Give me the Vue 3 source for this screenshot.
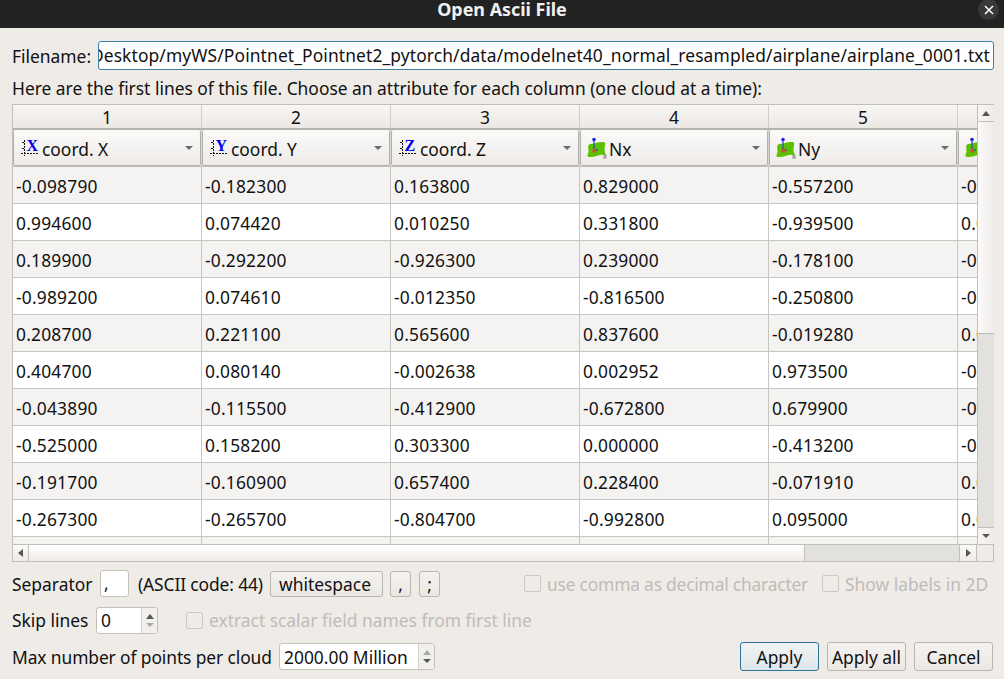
<script setup>
const cols = [
  { n: 1, kind: 'axis', letter: 'X', label: 'coord. X' },
  { n: 2, kind: 'axis', letter: 'Y', label: 'coord. Y' },
  { n: 3, kind: 'axis', letter: 'Z', label: 'coord. Z' },
  { n: 4, kind: 'leaf', label: 'Nx' },
  { n: 5, kind: 'leaf', label: 'Ny' },
  { n: 6, kind: 'leaf', label: '' }
]
const rows = [
  ['-0.098790', '-0.182300', '0.163800', '0.829000', '-0.557200', '-0.0'],
  ['0.994600', '0.074420', '0.010250', '0.331800', '-0.939500', '0.0'],
  ['0.189900', '-0.292200', '-0.926300', '0.239000', '-0.178100', '-0.0'],
  ['-0.989200', '0.074610', '-0.012350', '-0.816500', '-0.250800', '-0.0'],
  ['0.208700', '0.221100', '0.565600', '0.837600', '-0.019280', '0.0'],
  ['0.404700', '0.080140', '-0.002638', '0.002952', '0.973500', '-0.0'],
  ['-0.043890', '-0.115500', '-0.412900', '-0.672800', '0.679900', '-0.0'],
  ['-0.525000', '0.158200', '0.303300', '0.000000', '-0.413200', '-0.0'],
  ['-0.191700', '-0.160900', '0.657400', '0.228400', '-0.071910', '0.0'],
  ['-0.267300', '-0.265700', '-0.804700', '-0.992800', '0.095000', '0.0'],
  ['', '', '', '', '', '']
]
</script>

<template>
  <div class="dialog">
    <header class="titlebar">
      <span class="title">Open Ascii File</span>
      <span class="close">
        <svg width="10" height="10" viewBox="0 0 10 10"><path d="M1 1l8 8M9 1l-8 8" stroke="#fff" stroke-width="1.5" fill="none" /></svg>
      </span>
    </header>

    <main class="body">
      <div class="file-row">
        <label class="file-label">Filename:</label>
        <div class="file-input"><span class="file-text">Desktop/myWS/Pointnet_Pointnet2_pytorch/data/modelnet40_normal_resampled/airplane/airplane_0001.txt</span></div>
      </div>
      <p class="hint">Here are the first lines of this file. Choose an attribute for each column (one cloud at a time):</p>

      <section class="table">
        <div class="table-top">
          <div class="viewport">
            <div class="head-row">
              <div v-for="c in cols" :key="c.n" class="head-cell">{{ c.n }}</div>
            </div>
            <div class="combo-row">
              <div v-for="c in cols" :key="c.n" class="combo-cell">
                <div class="combo">
                  <svg v-if="c.kind === 'axis'" class="axis-icon" width="18" height="18" viewBox="0 0 18 18">
                    <path d="M3.500 1v16M0 14.500h17" stroke="#111" stroke-width="1" stroke-dasharray="2 1" fill="none" />
                    <path d="M1 3.500h2M1 9.500h2" stroke="#111" stroke-width="1" fill="none" />
                    <text x="5.500" y="12" class="axis-letter">{{ c.letter }}</text>
                  </svg>
                  <svg v-else class="leaf-icon" width="23" height="23" viewBox="0 0 23 23">
                    <path d="M2.500 9C5 7 6 8 8 7.500c3-.8 7-2 11-1 .8 2-.8 5-.5 7.500.2 2 1 4 1.500 6-2-1-4-1.500-6-1-3.500.8-8 3-12.500 1.500C1 19 3 16.500 2.500 14 2.200 12 2 10.500 2.500 9z" fill="#5cc000" />
                    <path d="M8 4v10h4" stroke="#2b50c8" stroke-width="1.300" fill="none" />
                    <circle cx="8" cy="3.500" r="1.800" fill="#2222ee" />
                    <rect x="6.500" y="13" width="3.500" height="3.500" fill="#d2502a" />
                    <path d="M18 23v-3.500l1-1 1 1V23M18 21h2" stroke="#888" stroke-width=".9" fill="none" />
                  </svg>
                  <span class="combo-text" v-if="c.label">{{ c.label }}</span>
                  <i class="combo-arrow"></i>
                </div>
              </div>
            </div>
            <div v-for="(r, i) in rows" :key="i" class="data-row" :class="{ alt: i % 2 === 0 }">
              <div v-for="(v, j) in r" :key="j" class="data-cell">{{ v }}</div>
            </div>
          </div>
          <div class="vscroll">
            <div class="sb-btn v"><i class="tri up"></i></div>
            <div class="v-thumb"></div>
            <div class="v-trough"></div>
            <div class="sb-btn v bottom"><i class="tri down"></i></div>
          </div>
        </div>
        <div class="hscroll">
          <div class="sb-btn h"><i class="tri left"></i></div>
          <div class="h-thumb"></div>
          <div class="h-trough"></div>
          <div class="sb-btn h right"><i class="tri right-t"></i></div>
          <div class="corner"></div>
        </div>
      </section>

      <div class="opt-row r1">
        <span class="sep-label">Separator</span>
        <div class="line-edit">,</div>
        <span class="ascii">(ASCII code: 44)</span>
        <button class="btn ws">whitespace</button>
        <button class="btn mini">,</button>
        <button class="btn mini">;</button>
        <span class="spacer"></span>
        <span class="check w-comma"><i class="box"></i>use comma as decimal character</span>
        <span class="check w-labels"><i class="box"></i>Show labels in 2D</span>
      </div>

      <div class="opt-row r2">
        <span class="skip-label">Skip lines</span>
        <div class="spin skip">
          <span class="spin-val">0</span>
          <div class="spin-btns"><i class="tri up"></i><i class="tri down dim"></i></div>
        </div>
        <span class="check w-extract"><i class="box"></i>extract scalar field names from first line</span>
      </div>

      <div class="opt-row r3">
        <span class="max-label">Max number of points per cloud</span>
        <div class="spin max">
          <span class="spin-val">2000.00 Million</span>
          <div class="spin-btns"><i class="tri up dim"></i><i class="tri down"></i></div>
        </div>
        <span class="spacer"></span>
        <button class="btn act primary">Apply</button>
        <button class="btn act">Apply all</button>
        <button class="btn act last">Cancel</button>
      </div>
    </main>
  </div>
</template>

<style>
html, body { margin: 0; padding: 0; background: #efebe7; }
</style>

<style scoped>
* { box-sizing: border-box; }
.dialog {
  width: 1004px; height: 679px; overflow: hidden; background: #efebe7; color: #111;
  font-family: "Noto Sans", "Open Sans", sans-serif; font-size: 17.4px; line-height: 20px;
  display: flex; flex-direction: column;
}
.titlebar {
  height: 28px; background: #222222; color: #f0f0f0; display: flex; align-items: center; justify-content: center;
  position: relative; flex: none;
}
.title { font-weight: 700; font-size: 17.9px; position: relative; top: -5px; }
.close {
  position: absolute; right: 5px; top: -1px; width: 21px; height: 21px; border-radius: 50%;
  background: #383838; display: flex; align-items: center; justify-content: center;
}
.body { padding: 13px 10px 0 12px; flex: 1; display: flex; flex-direction: column; }
.file-row { display: flex; align-items: center; height: 29px; }
.file-label { width: 86px; flex: none; }
.file-input {
  flex: 1; min-width: 0; height: 29px; background: #fff; border: 1px solid #3f7fa8; border-radius: 3px; overflow: hidden;
  display: flex; justify-content: flex-end; align-items: center; padding: 0 3px 2px 0; white-space: nowrap;
}
.file-text { flex: none; letter-spacing: .12px; }
.hint { margin: 8px 0 0; height: 20px; white-space: nowrap; }
.table {
  margin-top: 6px; width: 982px; height: 458px; border: 1px solid #c1bfbb; display: flex; flex-direction: column; flex: none;
}
.table-top { display: flex; height: 439px; flex: none; }
.viewport { width: 964px; overflow: hidden; flex: none; }
.head-row, .combo-row, .data-row { display: flex; width: 1134px; }
.head-row { height: 25px; border-bottom: 2px solid #b5b3af; }
.head-cell {
  width: 189px; flex: none; border-right: 1px solid #cfcdc9; text-align: center; line-height: 25px;
  background: linear-gradient(#f8f6f4, #ebe8e4);
}
.combo-row { height: 37px; background: #fff; border-bottom: 1px solid #c1bfbb; }
.combo-cell { width: 189px; flex: none; border-right: 1px solid #d5d3cf; }
.combo {
  height: 36px; display: flex; align-items: center; padding-left: 6px; position: relative;
  background: linear-gradient(#fbfaf9, #eeebe8); border: 1px solid #b3b1ad; border-top: 0; border-radius: 2px;
}
.axis-icon { flex: none; margin-right: 3px; margin-left: 1px; }
.axis-letter { font-family: "Liberation Serif", serif; font-weight: 700; font-size: 16px; fill: #0000ee; }
.leaf-icon { flex: none; margin-right: 0; margin-left: -1px; }
.combo-text { white-space: nowrap; padding-top: 2px; }
.combo-arrow {
  position: absolute; right: 7px; top: 16px; width: 0; height: 0;
  border-left: 4px solid transparent; border-right: 4px solid transparent; border-top: 4px solid #6b6b6b;
}
.data-row { height: 37px; background: #fff; border-bottom: 1px solid #c8c6c2; }
.data-row.alt { background: #f5f3f1; }
.data-cell {
  width: 189px; flex: none; border-right: 1px solid #c8c6c2; padding: 1px 0 0 3px; line-height: 36px; white-space: nowrap; overflow: hidden;
  letter-spacing: .2px;
}
.vscroll { margin-left: 0; border-left: 1px solid #c1bfbb; display: flex; flex-direction: column; flex: none; width: 17px; }
.sb-btn { background: linear-gradient(90deg, #f8f6f4, #eeebe8); display: flex; align-items: center; justify-content: center; flex: none; }
.sb-btn.v { height: 17px; border-bottom: 1px solid #c1bfbb; }
.sb-btn.v.bottom { border-bottom: 0; border-top: 1px solid #c1bfbb; }
.v-thumb { height: 212px; background: linear-gradient(90deg, #fbfaf9, #efecea); border-bottom: 1px solid #bdbbb7; flex: none; }
.v-trough { flex: 1; background: #e3e1dd; }
.hscroll { display: flex; height: 17px; border-top: 1px solid #c1bfbb; flex: none; }
.sb-btn.h { width: 16px; border-right: 1px solid #c1bfbb; background: linear-gradient(#fbfaf9, #eeebe8); }
.sb-btn.h.right { width: 18px; border-right: 1px solid #c1bfbb; border-left: 1px solid #c1bfbb; }
.h-thumb { width: 775px; background: linear-gradient(#fff, #efecea); flex: none; }
.h-trough { width: 155px; background: #e3e1dd; flex: none; border-left: 1px solid #c1bfbb; }
.corner { flex: 1; background: #efebe7; }
.tri { display: block; width: 0; height: 0; }
.tri.up { border-left: 4px solid transparent; border-right: 4px solid transparent; border-bottom: 5px solid #555; }
.tri.down { border-left: 4px solid transparent; border-right: 4px solid transparent; border-top: 4px solid #555; }
.tri.left { border-top: 4px solid transparent; border-bottom: 4px solid transparent; border-right: 5px solid #555; }
.tri.right-t { border-top: 4px solid transparent; border-bottom: 4px solid transparent; border-left: 5px solid #555; }
.tri.dim.up { border-bottom-color: #aaa; }
.tri.dim.down { border-top-color: #aaa; }
.opt-row { display: flex; align-items: center; white-space: nowrap; flex: none; }
.r1 { margin-top: 8px; height: 27px; }
.r2 { margin-top: 10px; height: 26px; }
.r3 { margin-top: 9px; height: 29px; }
.spacer { flex: 1; }
.sep-label { width: 88px; flex: none; }
.line-edit {
  width: 29px; height: 27px; flex: none; background: #fff; border: 1px solid #c4c1bd; border-radius: 3px; padding-left: 3px; line-height: 24px;
}
.ascii { margin-left: 9px; width: 126px; flex: none; letter-spacing: -.12px; }
.btn {
  font: inherit; color: inherit; padding: 0; height: 26px; border: 1px solid #b9b6b1; border-radius: 3px;
  background: linear-gradient(#f4f2f0, #ebe8e4); flex: none; text-align: center;
}
.ws { width: 113px; margin-left: 6px; padding-right: 3px; }
.mini { width: 21px; margin-left: 7px; }
.mini:nth-of-type(3) { margin-left: 8px; }
.check { display: flex; align-items: center; color: #bfbcb8; flex: none; }
.box { display: block; width: 17px; height: 17px; border: 1px solid #ccc9c5; border-radius: 2px; margin-right: 6px; flex: none; }
.w-comma { width: 284px; margin-right: 14px; letter-spacing: -.2px; }
.w-labels { width: 165px; margin-right: 7px; }
.w-extract { margin-left: 28px; }
.skip-label { width: 84px; flex: none; }
.spin {
  height: 27px; background: #fff; border: 1px solid #c4c1bd; border-radius: 3px; display: flex; align-items: center; flex: none;
}
.spin.skip { width: 62px; }
.spin.max { width: 156px; height: 27px; }
.spin-val { flex: 1; padding-left: 4px; }
.spin-btns {
  width: 16px; height: 100%; background: #f2f0ed; border-left: 1px solid #d3d0cc; display: flex; flex-direction: column; align-items: center; justify-content: space-around; padding: 4px 0;
}
.max-label { width: 267px; flex: none; letter-spacing: -.1px; }
.act { width: 79px; height: 29px; margin-left: 8px; }
.act.last { margin-right: 1px; }
.primary {
  margin-left: 0; border-color: #2f7299; background: linear-gradient(#f2f4f4, #dde6ea);
}
</style>
